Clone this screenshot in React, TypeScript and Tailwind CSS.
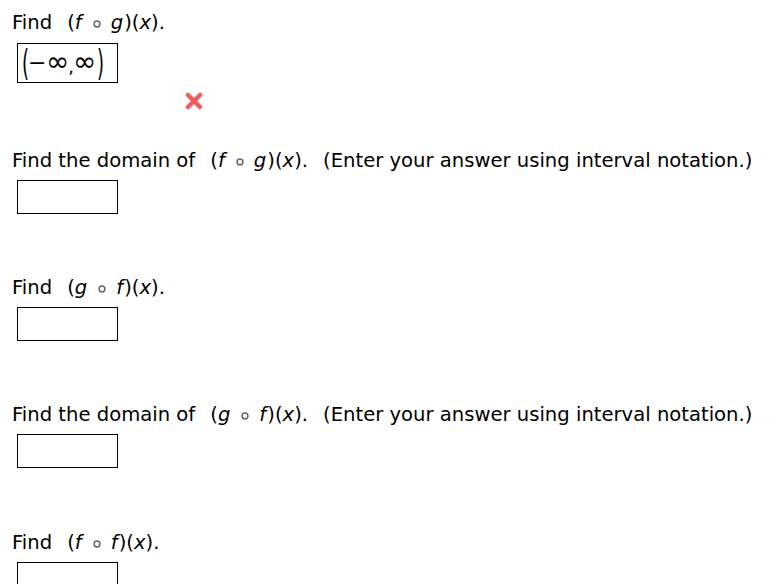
import React from "react";

const Circ = () => (
  <svg width="8" height="8" viewBox="0 0 8 8" className="inline-block mx-[10px] align-[1px]">
    <circle cx="4" cy="4" r="2.9" fill="none" stroke="#666" strokeWidth="1.5" />
  </svg>
);

const Expr = ({ a, b }: { a: string; b: string }) => (
  <span className="ml-[15px]">
    (<i className="pr-[1px]">{a}</i>
    <Circ />
    <i className="pr-[1px]">{b}</i>)(<i>x</i>).
  </span>
);

const Box = ({ className = "" }: { className?: string }) => (
  <div className={`w-[101px] h-[34px] border border-black ml-[5px] ${className}`} />
);

const Hint = () => <span className="ml-[15px]">(Enter your answer using interval notation.)</span>;

const Paren = ({ c }: { c: string }) => (
  <span className="inline-block w-[7px] text-center text-[24px] leading-none scale-y-[1.45] scale-x-75">{c}</span>
);

export default function App() {
  return (
    <div className="w-[782px] h-[584px] overflow-hidden bg-white text-black font-['DejaVu_Sans',Verdana,sans-serif] text-[19.6px] leading-[24px] pl-[12px] pt-[11px]">
      {/* part 1, answered */}
      <div>
        Find
        <Expr a="f" b="g" />
      </div>
      <div className="mt-[8px] ml-[5px] w-[101px] h-[40px] border border-black flex items-center pl-[3px]">
        <Paren c="(" />
        <span className="w-[18px] text-[22px] leading-none text-center">−</span>
        <span className="text-[28px] leading-none -mt-[2px]">∞</span>
        <span className="text-[18px] leading-none mt-[8px] -mx-[1px]">,</span>
        <span className="text-[28px] leading-none -mt-[2px]">∞</span>
        <Paren c=")" />
      </div>
      <div className="ml-[173px] mt-[9px] h-[18px] w-[18px]">
        <svg width="18" height="18" viewBox="0 0 18 18">
          <path d="M3 3 L15 15 M15 3 L3 15" stroke="#f25a5e" strokeWidth="4.5" strokeLinecap="round" />
        </svg>
      </div>

      <div className="mt-[39px]">
        Find the domain of
        <Expr a="f" b="g" />
        <Hint />
      </div>
      <Box className="mt-[7px]" />

      <div className="mt-[62px]">
        Find
        <Expr a="g" b="f" />
      </div>
      <Box className="mt-[7px]" />

      <div className="mt-[62px]">
        Find the domain of
        <Expr a="g" b="f" />
        <Hint />
      </div>
      <Box className="mt-[7px]" />

      <div className="mt-[63px]">
        Find
        <Expr a="f" b="f" />
      </div>
      <Box className="mt-[7px]" />
    </div>
  );
}
